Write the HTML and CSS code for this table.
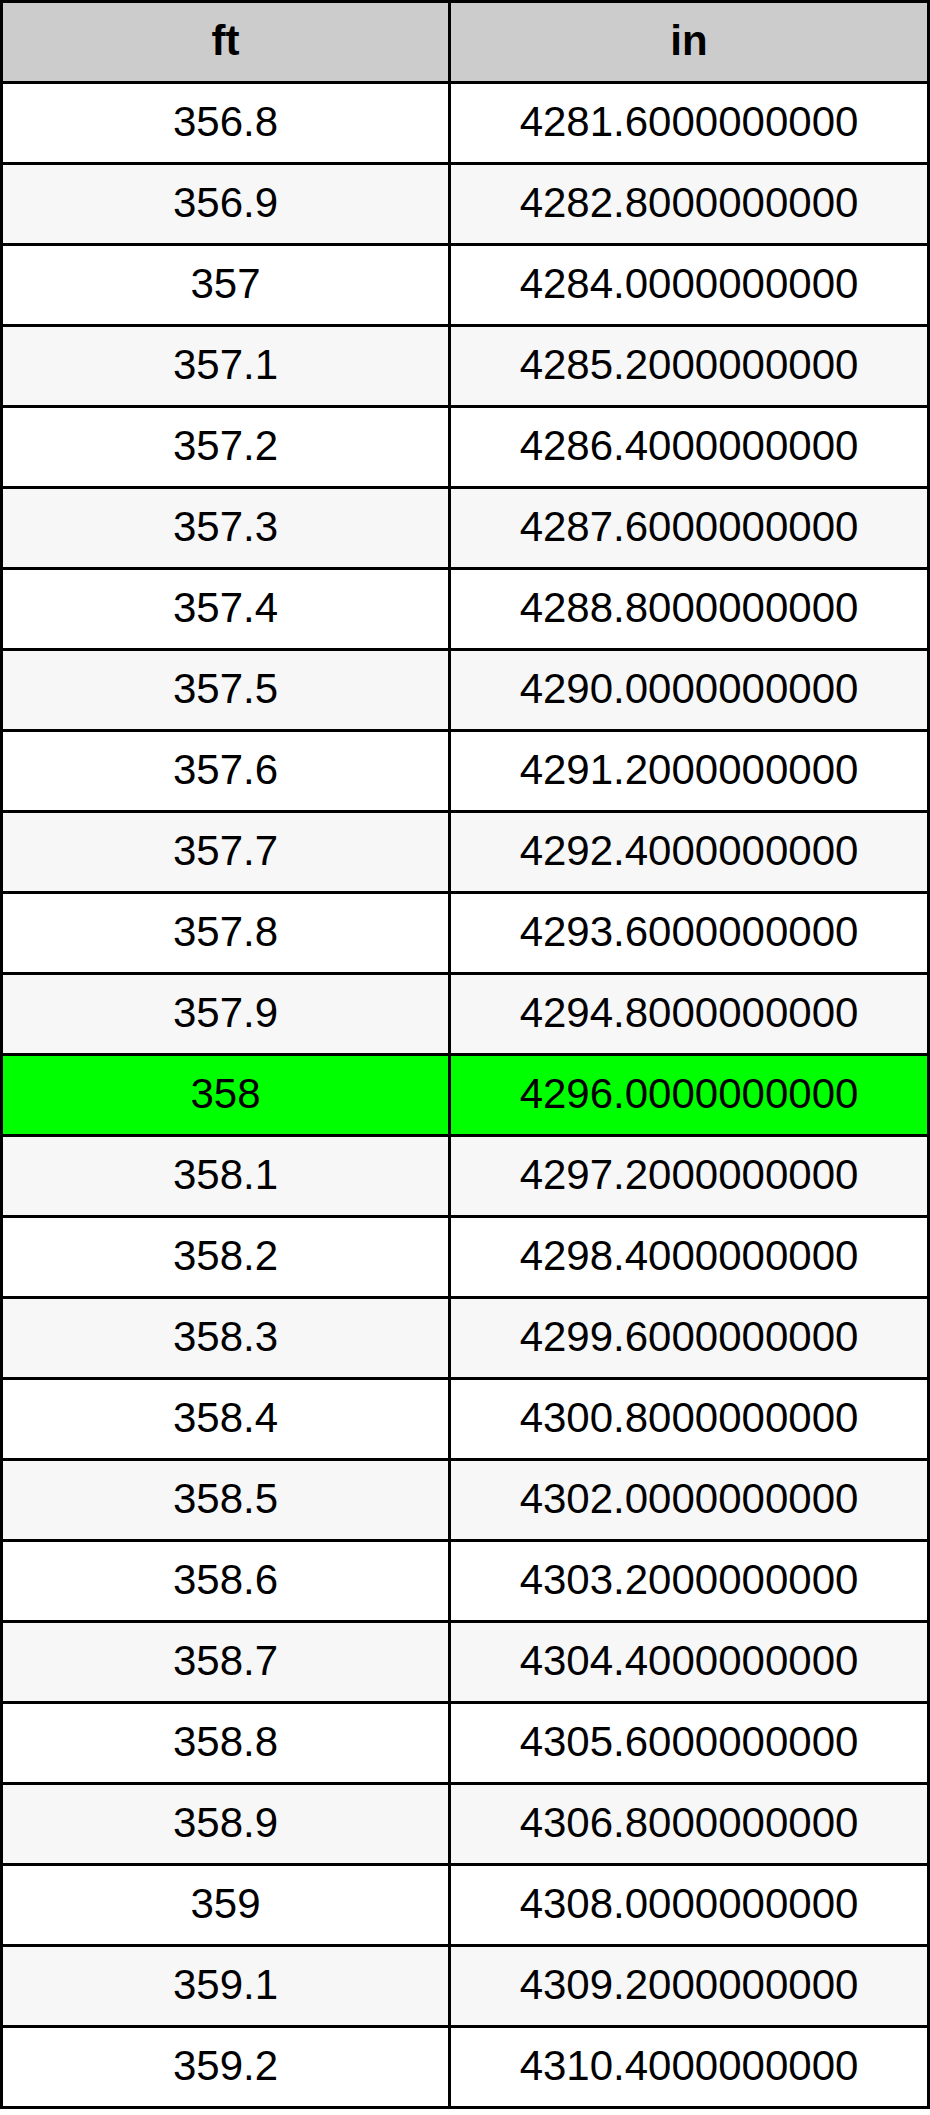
FILE: index.html
```html
<!DOCTYPE html>
<html>
<head>
<meta charset="utf-8">
<title>ft to in</title>
<link rel="stylesheet" href="styles.css">
</head>
<body>
<div class="table">
  <div class="cell head">ft</div><div class="cell head">in</div>
  <div class="cell">356.8</div><div class="cell">4281.6000000000</div>
  <div class="cell alt">356.9</div><div class="cell alt">4282.8000000000</div>
  <div class="cell">357</div><div class="cell">4284.0000000000</div>
  <div class="cell alt">357.1</div><div class="cell alt">4285.2000000000</div>
  <div class="cell">357.2</div><div class="cell">4286.4000000000</div>
  <div class="cell alt">357.3</div><div class="cell alt">4287.6000000000</div>
  <div class="cell">357.4</div><div class="cell">4288.8000000000</div>
  <div class="cell alt">357.5</div><div class="cell alt">4290.0000000000</div>
  <div class="cell">357.6</div><div class="cell">4291.2000000000</div>
  <div class="cell alt">357.7</div><div class="cell alt">4292.4000000000</div>
  <div class="cell">357.8</div><div class="cell">4293.6000000000</div>
  <div class="cell alt">357.9</div><div class="cell alt">4294.8000000000</div>
  <div class="cell hl">358</div><div class="cell hl">4296.0000000000</div>
  <div class="cell alt">358.1</div><div class="cell alt">4297.2000000000</div>
  <div class="cell">358.2</div><div class="cell">4298.4000000000</div>
  <div class="cell alt">358.3</div><div class="cell alt">4299.6000000000</div>
  <div class="cell">358.4</div><div class="cell">4300.8000000000</div>
  <div class="cell alt">358.5</div><div class="cell alt">4302.0000000000</div>
  <div class="cell">358.6</div><div class="cell">4303.2000000000</div>
  <div class="cell alt">358.7</div><div class="cell alt">4304.4000000000</div>
  <div class="cell">358.8</div><div class="cell">4305.6000000000</div>
  <div class="cell alt">358.9</div><div class="cell alt">4306.8000000000</div>
  <div class="cell">359</div><div class="cell">4308.0000000000</div>
  <div class="cell alt">359.1</div><div class="cell alt">4309.2000000000</div>
  <div class="cell">359.2</div><div class="cell">4310.4000000000</div>
</div>
</body>
</html>
```
FILE: styles.css
```css
html, body {
  margin: 0;
  padding: 0;
  background: #ffffff;
}

.table {
  display: grid;
  grid-template-columns: 448px 479px;
  grid-auto-rows: 81px;
  width: 927px;
  border-top: 3px solid #000;
  border-left: 3px solid #000;
  font-family: "Liberation Sans", Arial, sans-serif;
  font-size: 42px;
  color: #000;
}

.cell {
  box-sizing: border-box;
  border-right: 3px solid #000;
  border-bottom: 3px solid #000;
  display: flex;
  align-items: center;
  justify-content: center;
  padding-bottom: 2px;
  line-height: 1;
  background: #ffffff;
}

.head {
  background: #cccccc;
  font-weight: bold;
}

.alt {
  background: #f7f7f7;
}

.hl {
  background: #00ff00;
}
```
